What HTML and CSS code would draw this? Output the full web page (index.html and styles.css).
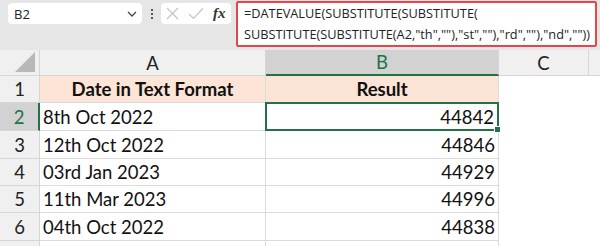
FILE: index.html
```html
<!DOCTYPE html>
<html lang="en">
<head>
    <meta charset="UTF-8">
    <title>DATEVALUE with SUBSTITUTE</title>
    <link rel="stylesheet" href="styles.css">
</head>
<body>
    <div class="toolbar">
        <div class="name-box">
            <span class="name">B2</span>
            <svg class="chevron" width="10" height="6" viewBox="0 0 10 6"><path d="M1 1 L5 5 L9 1" fill="none" stroke="#444" stroke-width="1.3"/></svg>
        </div>
        <div class="dots"><i></i><i></i><i></i></div>
        <div class="func-box">
            <svg width="13" height="13" viewBox="0 0 13 13"><path d="M1 1 L12 12 M12 1 L1 12" stroke="#c4c4c4" stroke-width="1.2"/></svg>
            <svg width="16" height="13" viewBox="0 0 16 13"><path d="M1 7 L5.5 11.5 L15 1.5" fill="none" stroke="#c4c4c4" stroke-width="1.2"/></svg>
            <span class="fx">fx</span>
        </div>
        <div class="formula">=DATEVALUE(SUBSTITUTE(SUBSTITUTE(<br>SUBSTITUTE(SUBSTITUTE(A2,"th",""),"st",""),"rd",""),"nd",""))</div>
    </div>

    <div class="sheet">
        <div class="corner"><span class="tri"></span></div>
        <div class="col-head">A</div>
        <div class="col-head active">B</div>
        <div class="col-head">C</div>
        <div class="col-head last"></div>

        <div class="row-head">1</div>
        <div class="cell title">Date in Text Format</div>
        <div class="cell title">Result</div>
        <div class="cell blank"></div>
        <div class="cell blank"></div>

        <div class="row-head active">2</div>
        <div class="cell">8th Oct 2022</div>
        <div class="cell num selected">44842<span class="handle"></span></div>
        <div class="cell blank"></div>
        <div class="cell blank"></div>

        <div class="row-head">3</div>
        <div class="cell">12th Oct 2022</div>
        <div class="cell num">44846</div>
        <div class="cell blank"></div>
        <div class="cell blank"></div>

        <div class="row-head">4</div>
        <div class="cell">03rd Jan 2023</div>
        <div class="cell num">44929</div>
        <div class="cell blank"></div>
        <div class="cell blank"></div>

        <div class="row-head">5</div>
        <div class="cell">11th Mar 2023</div>
        <div class="cell num">44996</div>
        <div class="cell blank"></div>
        <div class="cell blank"></div>

        <div class="row-head">6</div>
        <div class="cell">04th Oct 2022</div>
        <div class="cell num">44838</div>
        <div class="cell blank"></div>
        <div class="cell blank"></div>

        <div class="row-head tail"></div>
        <div class="cell tail"></div>
        <div class="cell tail"></div>
        <div class="cell blank"></div>
        <div class="cell blank"></div>
    </div>
</body>
</html>
```

FILE: styles.css
```css
body {
    margin: 0;
    background: #fff;
    width: 600px;
    height: 246px;
    overflow: hidden;
    font-family: "Open Sans", "Liberation Sans", sans-serif;
}
.toolbar {
    display: flex;
    align-items: flex-start;
    height: 50px;
    background: #e6e6e6;
    box-sizing: border-box;
    padding: 1px 3px 0 8px;
}
.name-box {
    display: flex;
    align-items: center;
    justify-content: space-between;
    width: 134px;
    height: 21px;
    margin-top: 2px;
    padding: 0 5px 0 6px;
    box-sizing: border-box;
    background: #fff;
    border-radius: 4px;
}
.name {
    font-size: 13px;
    color: #222;
}
.dots {
    display: flex;
    flex-direction: column;
    gap: 2px;
    margin: 8px 8px 0 9px;
}
.dots i {
    width: 2px;
    height: 2px;
    background: #555;
}
.func-box {
    display: flex;
    align-items: center;
    gap: 9px;
    width: 70px;
    height: 21px;
    margin-top: 2px;
    padding-left: 5px;
    box-sizing: border-box;
    background: #fff;
    border-radius: 4px;
}
.fx {
    font-family: "Liberation Serif", serif;
    font-style: italic;
    font-weight: bold;
    font-size: 15px;
    color: #333;
}
.formula {
    flex: 1;
    margin-left: 5px;
    height: 46px;
    box-sizing: border-box;
    border: 2px solid #e8454b;
    border-radius: 2px;
    background: #fff;
    padding: 0 0 0 6px;
    font-size: 12.75px;
    line-height: 21px;
    color: #222;
    white-space: nowrap;
    overflow: hidden;
}
.sheet {
    display: grid;
    grid-template-columns: 40px 226px 233px 90px 1fr;
    grid-template-rows: 26px 27px 28px 28px 27px 27px 28px 5px;
    font-family: "Lato", "Open Sans", sans-serif;
    font-size: 18.5px;
    color: #111;
}
.corner {
    position: relative;
    background: #f0f0f0;
    border-right: 1px solid #d6d6d6;
    border-bottom: 1px solid #d6d6d6;
}
.tri {
    position: absolute;
    right: 4px;
    bottom: 3px;
    width: 0;
    height: 0;
    border-left: 20px solid transparent;
    border-bottom: 20px solid #b8b8b8;
}
.col-head {
    display: flex;
    align-items: center;
    justify-content: center;
    background: #f0f0f0;
    border-right: 1px solid #d6d6d6;
    border-bottom: 1px solid #d6d6d6;
    color: #222;
}
.col-head.active {
    background: #d2d2d2;
    color: #217346;
    border-bottom: 2px solid #217346;
}
.col-head.last {
    border-right: none;
}
.row-head {
    display: flex;
    align-items: center;
    justify-content: center;
    background: #f0f0f0;
    border-right: 1px solid #d6d6d6;
    border-bottom: 1px solid #d6d6d6;
    color: #222;
}
.row-head.active {
    background: #d2d2d2;
    color: #217346;
    border-right: 2px solid #217346;
}
.cell {
    display: flex;
    align-items: center;
    padding: 0 3px;
    border-right: 1px solid #dadada;
    border-bottom: 1px solid #dadada;
    white-space: nowrap;
}
.cell.title {
    justify-content: center;
    font-weight: bold;
    background: #fce4d6;
}
.cell.num {
    justify-content: flex-end;
}
.cell.blank {
    border-color: transparent;
}
.tail {
    border-bottom: none;
}
.cell.selected {
    position: relative;
    border: 2px solid #217346;
    margin: -1px 0 0 -1px;
}
.handle {
    position: absolute;
    right: -4px;
    bottom: -4px;
    width: 5px;
    height: 5px;
    background: #217346;
    border: 1px solid #fff;
}
```
